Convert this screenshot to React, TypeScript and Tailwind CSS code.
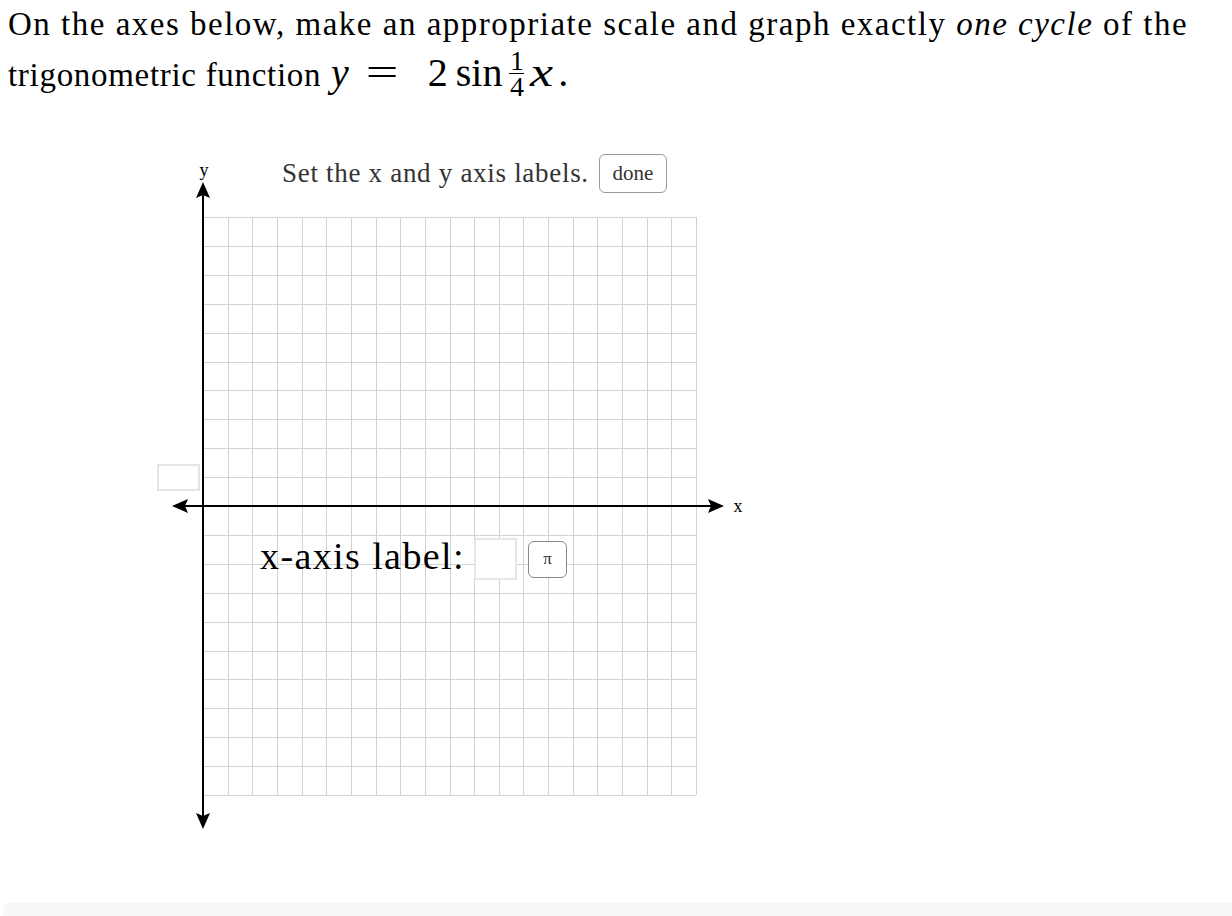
import React from "react";

const COLS = 20;
const ROWS = 20;
const CW = 24.65;
const CH = 28.9;
const GX = 53;
const GY = 67;

function Grid() {
  const lines: React.ReactNode[] = [];
  for (let i = 0; i <= COLS; i++) {
    const x = Math.round(GX + i * CW) + 0.5;
    lines.push(<line key={"v" + i} x1={x} y1={GY} x2={x} y2={GY + ROWS * CH} stroke="#d2d2d2" strokeWidth={1} />);
  }
  for (let j = 0; j <= ROWS; j++) {
    const y = Math.round(GY + j * CH) + 0.5;
    lines.push(<line key={"h" + j} x1={GX} y1={y} x2={GX + COLS * CW} y2={y} stroke="#d2d2d2" strokeWidth={1} />);
  }
  return <g>{lines}</g>;
}

export default function App() {
  const axisY = 356;
  const axisX = 53;

  return (
    <div className="min-h-screen bg-white text-black" style={{ fontFamily: '"Liberation Serif", "Times New Roman", serif' }}>
      <p className="pl-2 pr-2 text-[33px] leading-[48px] tracking-[1.5px] h-[96px] overflow-visible">
        On the axes below, make an appropriate scale and graph exactly <em>one cycle</em> of the{" "}
        <span className="tracking-[0.7px]">trigonometric function</span>{" "}
        <span className="text-[40px] leading-[48px] tracking-normal whitespace-nowrap">
          <i>y</i>
          <span className="inline-block w-[32px] ml-[17px] mr-[30px] text-center scale-x-[1.45]">=</span>2
          <span className="ml-[8px]">sin</span>
          <span className="inline-flex flex-col items-center align-[16px] ml-[7px] mr-[6px] text-[28px] leading-[25px]">
            <span>1</span>
            <span className="block w-[15px] border-t-[1.5px] border-black" />
            <span>4</span>
          </span>
          <i className="inline-block mr-[10px] scale-x-[1.3] origin-left">x</i>.
        </span>
      </p>

      <div className="relative ml-[150px] mt-[54px] w-[620px] h-[700px]">
        <svg width="620" height="700" className="absolute left-0 top-0">
          <Grid />
          {/* y axis */}
          <line x1={axisX} y1={44} x2={axisX} y2={667} stroke="#000" strokeWidth={2} />
          <path d={`M${axisX},32 L${axisX + 7},48 L${axisX},45 L${axisX - 7},48 Z`} fill="#000" />
          <path d={`M${axisX},679 L${axisX + 7},663 L${axisX},666 L${axisX - 7},663 Z`} fill="#000" />
          {/* x axis */}
          <line x1={34} y1={axisY} x2={562} y2={axisY} stroke="#000" strokeWidth={2} />
          <path d={`M22,${axisY} L38,${axisY - 7} L35,${axisY} L38,${axisY + 7} Z`} fill="#000" />
          <path d={`M574,${axisY} L558,${axisY - 7} L561,${axisY} L558,${axisY + 7} Z`} fill="#000" />
          <text x={axisX + 1} y={26} textAnchor="middle" fontSize="18" fontFamily="Liberation Serif, serif" fill="#000">y</text>
          <text x={588} y={362} textAnchor="middle" fontSize="18" fontFamily="Liberation Serif, serif" fill="#000">x</text>
        </svg>

        {/* header prompt */}
        <div className="absolute left-[132px] top-[3px] flex items-center gap-[10px]">
          <span className="text-[27px] tracking-[0.7px] text-[#333]">Set the x and y axis labels.</span>
          <button className="h-[39px] w-[68px] rounded-[6px] border border-[#999] bg-white text-[21px] text-[#333]">done</button>
        </div>

        {/* y-axis label input */}
        <div className="absolute left-[7px] top-[314px] h-[27px] w-[43px] border-2 border-[#e3e3e8] bg-white" />

        {/* x-axis label */}
        <div className="absolute left-[110px] top-[388px] flex items-center">
          <span className="text-[38px] tracking-[1.4px] leading-none -mt-[6px]">x-axis label:</span>
          <div className="ml-[9px] h-[42px] w-[43px] border-2 border-[#e5e5ea] bg-white" />
          <button className="ml-[11px] h-[37px] w-[39px] rounded-[6px] border border-[#888] bg-white text-[17px] text-[#333]">π</button>
        </div>
      </div>

      <div className="ml-[3px] mt-[53px] h-[13px] rounded-tl-[6px] bg-[#f7f8fa]" />
    </div>
  );
}
